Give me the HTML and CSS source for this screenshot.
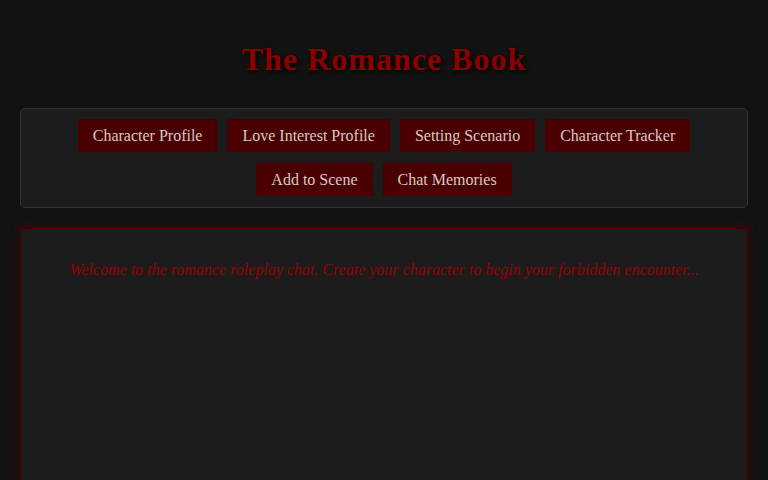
FILE: index.html
```html
<!DOCTYPE html>
<html lang="en">
<head>
    <meta charset="UTF-8">
    <meta name="viewport" content="width=device-width, initial-scale=1.0">
    <title>The Romance Book</title>
    <link rel="stylesheet" href="styles.css">
</head>
<body>
    <h1>The Romance Book</h1>
    <div class="menu">
        <button class="menu-btn">Character Profile</button>
        <button class="menu-btn">Love Interest Profile</button>
        <button class="menu-btn">Setting Scenario</button>
        <button class="menu-btn">Character Tracker</button>
        <button class="menu-btn">Add to Scene</button>
        <button class="menu-btn">Chat Memories</button>
    </div>
    <div class="chat" id="chat">
        <p class="welcome">Welcome to the romance roleplay chat. Create your character to begin your forbidden encounter...</p>
    </div>
</body>
</html>
```

FILE: styles.css
```css
body {
    font-family: "Liberation Serif", "Times New Roman", serif;
    background-color: #121212;
    color: #d8c8c8;
    margin: 0;
    padding: 20px;
}
h1 {
    text-align: center;
    color: #8b0000;
    font-size: 32px;
    font-weight: bold;
    letter-spacing: 1px;
    margin: 21px 0 30px;
    text-shadow: 2px 2px 4px #000;
}
.menu {
    background: #1c1c1c;
    border: 1px solid #333;
    border-radius: 5px;
    padding: 10px 20px 11px;
    display: flex;
    flex-wrap: wrap;
    justify-content: center;
    gap: 11px 10px;
    margin-bottom: 20px;
}
.menu-btn {
    font-family: inherit;
    font-size: 16px;
    background: #4a0000;
    color: #d8c8c8;
    border: none;
    padding: 8px 15px;
    line-height: 17px;
    cursor: pointer;
}
.menu-btn:hover {
    background: #660000;
}
.chat {
    background: #1c1c1c;
    border: 1px solid #4a0000;
    box-shadow: 0 0 10px rgba(139, 0, 0, 0.3);
    height: 300px;
    padding: 20px;
}
.welcome {
    text-align: center;
    font-style: italic;
    color: #990000;
    margin: 12px 0;
}
```
